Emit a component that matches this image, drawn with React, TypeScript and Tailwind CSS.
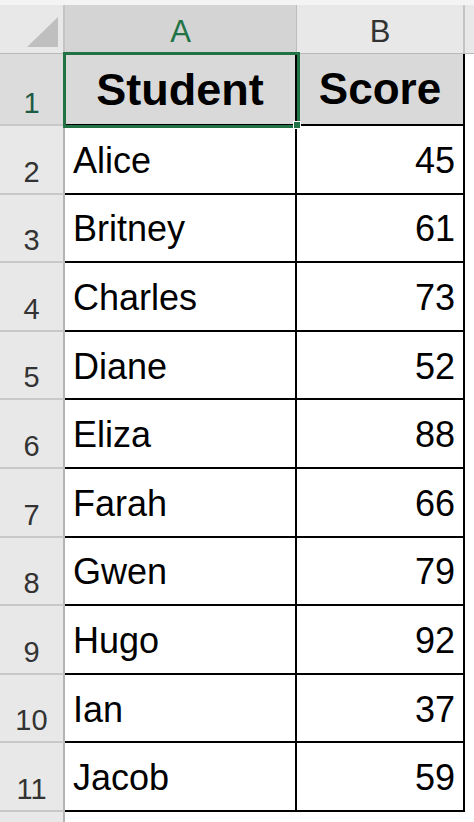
import React from "react";

const rows: [string, number][] = [
  ["Alice", 45],
  ["Britney", 61],
  ["Charles", 73],
  ["Diane", 52],
  ["Eliza", 88],
  ["Farah", 66],
  ["Gwen", 79],
  ["Hugo", 92],
  ["Ian", 37],
  ["Jacob", 59],
];

export default function App() {
  return (
    <div
      className="w-[474px] h-[822px] overflow-hidden bg-white"
      style={{ fontFamily: '"Liberation Sans", Arial, sans-serif' }}
    >
      {/* top strip */}
      <div className="h-[5px] bg-[#f4f4f4]" />
      {/* column header row */}
      <div className="flex h-[49px] border-b border-[#b9b9b9]">
        <div className="w-[65px] shrink-0 bg-[#e8e8e8] border-r-2 border-[#c4c4c4] flex items-center justify-center">
          <svg width="63" height="48" viewBox="0 0 63 48">
            <polygon points="58,12 58,42 27,42" fill="#bfbfbf" />
          </svg>
        </div>
        <div className="w-[232px] shrink-0 bg-[#d4d4d4] border-r border-[#bdbdbd] flex items-end justify-center pb-[6px] text-[31px] leading-none text-[#217346]">
          A
        </div>
        <div className="w-[168px] shrink-0 bg-[#e8e8e8] border-r-2 border-[#c4c4c4] flex items-end justify-center pb-[6px] text-[31px] leading-none text-[#333333]">
          B
        </div>
        <div className="flex-1 bg-[#e8e8e8]" />
      </div>
      {/* row 1 */}
      <div className="flex h-[72px] relative">
        <div className="w-[65px] shrink-0 bg-[#dcdcdc] border-r-2 border-r-[#b4b4b4] border-b-2 border-b-[#c8c8c8] flex items-end justify-center pb-[6px] text-[29px] leading-none text-[#1f5c44]">
          1
        </div>
        <div className="w-[232px] shrink-0 bg-[#d9d9d9] border-b-2 border-black border-r-2 flex items-center justify-center text-[45px] font-bold leading-none text-black">
          Student
        </div>
        <div className="w-[168px] shrink-0 bg-[#d9d9d9] border-r-2 border-b-2 border-black flex items-center justify-center text-[44px] font-bold leading-none text-black">
          Score
        </div>
        <div className="flex-1 bg-white" />
        {/* selection */}
        <div className="absolute left-[63px] top-[-2px] w-[237px] h-[76px] border-[3px] border-[#217346] pointer-events-none" />
        <div className="absolute left-[293px] top-[67px] w-[8px] h-[8px] bg-[#217346] border border-white" />
      </div>
      {rows.map(([name, score], i) => (
        <div key={name} className="flex h-[68.6px]">
          <div className="w-[65px] shrink-0 bg-[#e8e8e8] border-r-2 border-r-[#b4b4b4] border-b-2 border-b-[#c8c8c8] flex items-end justify-center pb-[6px] text-[29px] leading-none text-[#333333]">
            {i + 2}
          </div>
          <div className="w-[232px] shrink-0 border-b-2 border-r-2 border-black flex items-center pl-[8px] pt-[3px] text-[36px] leading-none text-black">
            {name}
          </div>
          <div className="w-[168px] shrink-0 border-b-2 border-r-2 border-black flex items-center justify-end pr-[8px] pt-[3px] text-[36px] leading-none text-black">
            {score}
          </div>
          <div className="flex-1 bg-white" />
        </div>
      ))}
      <div className="flex h-[20px]">
        <div className="w-[65px] shrink-0 bg-[#e8e8e8] border-r-2 border-[#b4b4b4]" />
        <div className="flex-1 bg-white" />
      </div>
    </div>
  );
}
